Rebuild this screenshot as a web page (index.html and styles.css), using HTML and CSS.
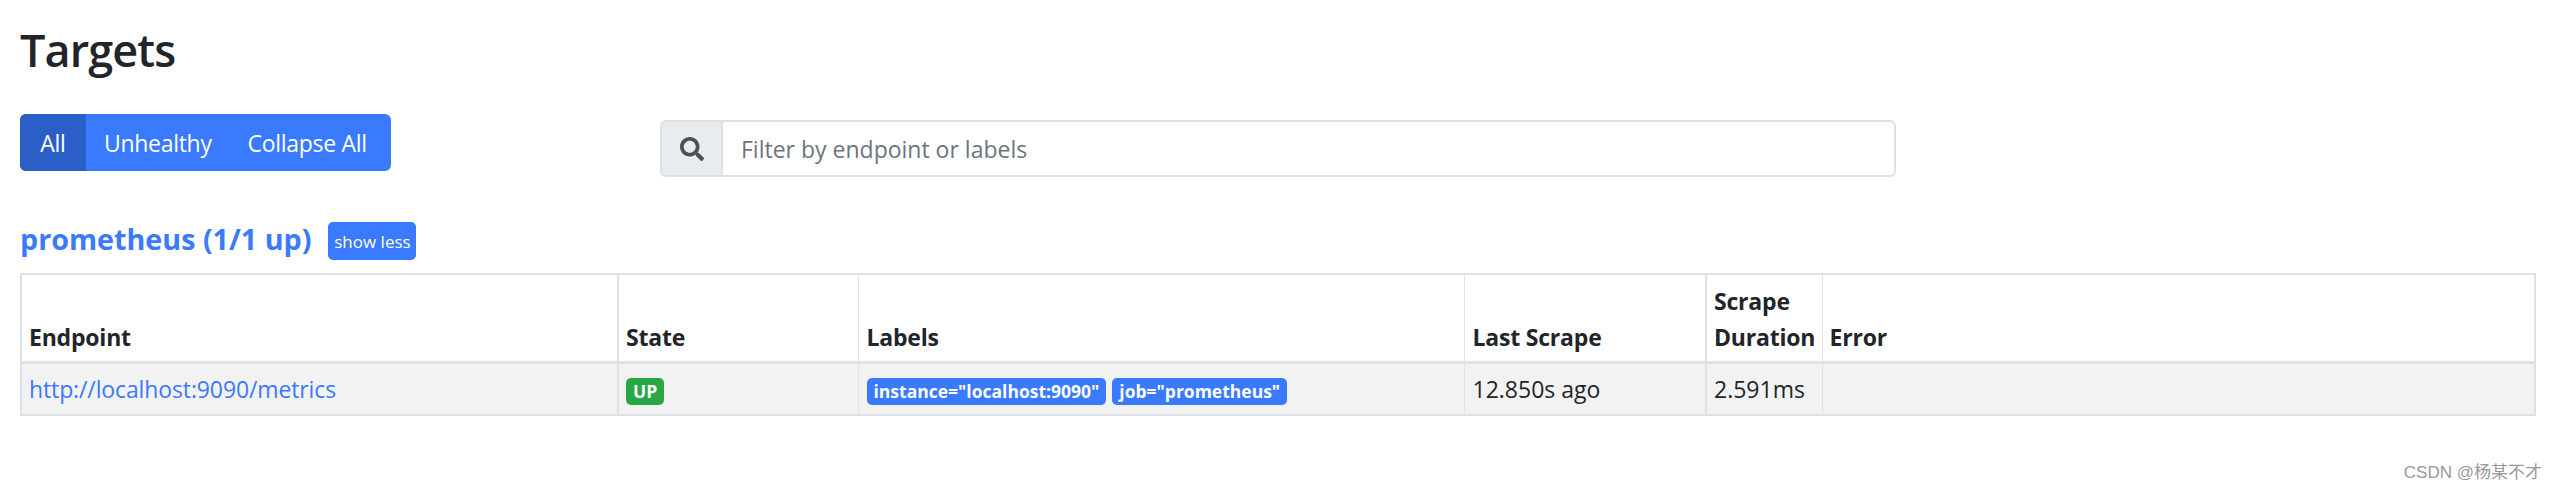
FILE: index.html
```html
<!DOCTYPE html>
<html lang="en">
<head>
<meta charset="utf-8">
<title>Targets</title>
<link rel="stylesheet" href="styles.css">
</head>
<body>
<main class="page">
  <h2 class="title">Targets</h2>
  <div class="controls">
    <div class="btn-group">
      <button class="btn active">All</button>
      <button class="btn">Unhealthy</button>
      <button class="btn">Collapse All</button>
    </div>
    <div class="search">
      <span class="search-icon">
        <svg viewBox="0 0 512 512" width="24" height="24"><path fill="#495057" d="M505 442.700L405.300 343c-4.500-4.500-10.600-7-17-7H372c27.600-35.300 44-79.700 44-128C416 93.100 322.900 0 208 0S0 93.100 0 208s93.100 208 208 208c48.300 0 92.700-16.400 128-44v16.300c0 6.400 2.500 12.500 7 17l99.700 99.700c9.400 9.400 24.600 9.400 33.900 0l28.300-28.300c9.400-9.400 9.400-24.600.1-34zM208 336c-70.700 0-128-57.200-128-128 0-70.700 57.200-128 128-128 70.700 0 128 57.200 128 128 0 70.700-57.200 128-128 128z"/></svg>
      </span>
      <input class="search-input" type="text" placeholder="Filter by endpoint or labels">
    </div>
  </div>
  <div class="pool-head">
    <a class="pool-name" href="#">prometheus (1/1 up)</a>
    <button class="btn-sm">show less</button>
  </div>
  <table class="targets">
    <colgroup>
      <col class="c-endpoint"><col class="c-state"><col class="c-labels"><col class="c-scrape"><col class="c-duration"><col class="c-error">
    </colgroup>
    <thead>
      <tr><th>Endpoint</th><th>State</th><th>Labels</th><th>Last Scrape</th><th>Scrape Duration</th><th>Error</th></tr>
    </thead>
    <tbody>
      <tr>
        <td><a href="#">http://localhost:9090/metrics</a></td>
        <td><span class="badge up">UP</span></td>
        <td><span class="badge label">instance="localhost:9090"</span> <span class="badge label">job="prometheus"</span></td>
        <td>12.850s ago</td>
        <td>2.591ms</td>
        <td></td>
      </tr>
    </tbody>
  </table>
</main>
<div class="watermark">CSDN @杨某不才</div>
</body>
</html>
```
FILE: styles.css
```css
* { box-sizing: border-box; }
html, body { margin: 0; height: 100%; background: #fff; overflow: hidden; }
body { position: relative; font-family: "Open Sans", "Noto Sans", sans-serif; font-size: 23px; line-height: 36px; color: #212529; }
.page { padding: 21px 21px 0 20px; }
.title { margin: 0 0 35px; font-size: 45px; line-height: 58px; font-weight: 600; letter-spacing: -0.9px; color: #212529; }
.controls { display: flex; align-items: flex-start; height: 63px; margin-bottom: 45px; }
.btn-group { display: flex; width: 371px; height: 57px; background: #3a7afe; border-radius: 6px; overflow: hidden; }
.btn { border: 0; background: #3a7afe; color: #fff; font: inherit; letter-spacing: -0.3px; padding: 0 18px; height: 57px; white-space: nowrap; }
.btn.active { background: #2b5fc7; width: 66px; padding: 0; }
.search { display: flex; margin: 6px 0 0 269px; width: 1236px; height: 57px; }
.search-icon { display: flex; align-items: center; justify-content: center; width: 62px; background: #e9ecef; border: 2px solid #dde1e6; border-right-width: 1px; border-radius: 6px 0 0 6px; }
.search-input { flex: 1; min-width: 0; border: 2px solid #dde1e6; border-left-width: 1px; border-radius: 0 6px 6px 0; padding: 0 18px; font: inherit; outline: 0; }
.search-input::placeholder { color: #6c757d; opacity: 1; }
.pool-head { display: flex; align-items: center; height: 38px; margin-bottom: 13px; }
.pool-name { margin-bottom: 4px; font-size: 28.700px; font-weight: 700; color: #3a7afe; text-decoration: none; }
.btn-sm { margin-left: 17px; width: 88px; height: 38px; border: 0; border-radius: 5px; background: #3a7afe; color: #fff; font: 17px/27px "Open Sans", sans-serif; padding: 0; }
.targets { width: 2516px; table-layout: fixed; border-collapse: collapse; border: 2px solid #dee2e6; }
.c-endpoint { width: 597px; }
.c-state { width: 240px; }
.c-labels { width: 606px; }
.c-scrape { width: 242px; }
.c-duration { width: 116px; }
.targets th, .targets td { padding: 7px; border: 1px solid #dee2e6; text-align: left; vertical-align: bottom; }
.targets th:nth-child(2), .targets td:nth-child(2), .targets th:nth-child(5), .targets td:nth-child(5) { border-left-width: 2px; }
.targets thead th { padding: 8px 7px 6px; border-bottom: 3px solid #dee2e6; font-weight: 700; letter-spacing: -0.2px; }
.targets thead th:nth-child(3), .targets thead th:nth-child(4), .targets td:nth-child(3), .targets td:nth-child(4) { padding-left: 8px; }
.targets tbody tr { background: #f2f2f2; }
.targets td { vertical-align: middle; }
.targets a { color: #3a7afe; text-decoration: none; letter-spacing: -0.12px; }
.badge { display: inline-block; padding: 0 7px; height: 27px; border-radius: 5px; font-size: 17.500px; line-height: 27px; font-weight: 700; color: #fff; vertical-align: middle; }
.badge.up { background: #28a745; }
.badge.label { background: #3a7afe; }
.watermark { position: absolute; right: 15px; bottom: 8px; font: 17px/20px "Liberation Sans", "Noto Sans CJK SC", sans-serif; color: #999; }
```
